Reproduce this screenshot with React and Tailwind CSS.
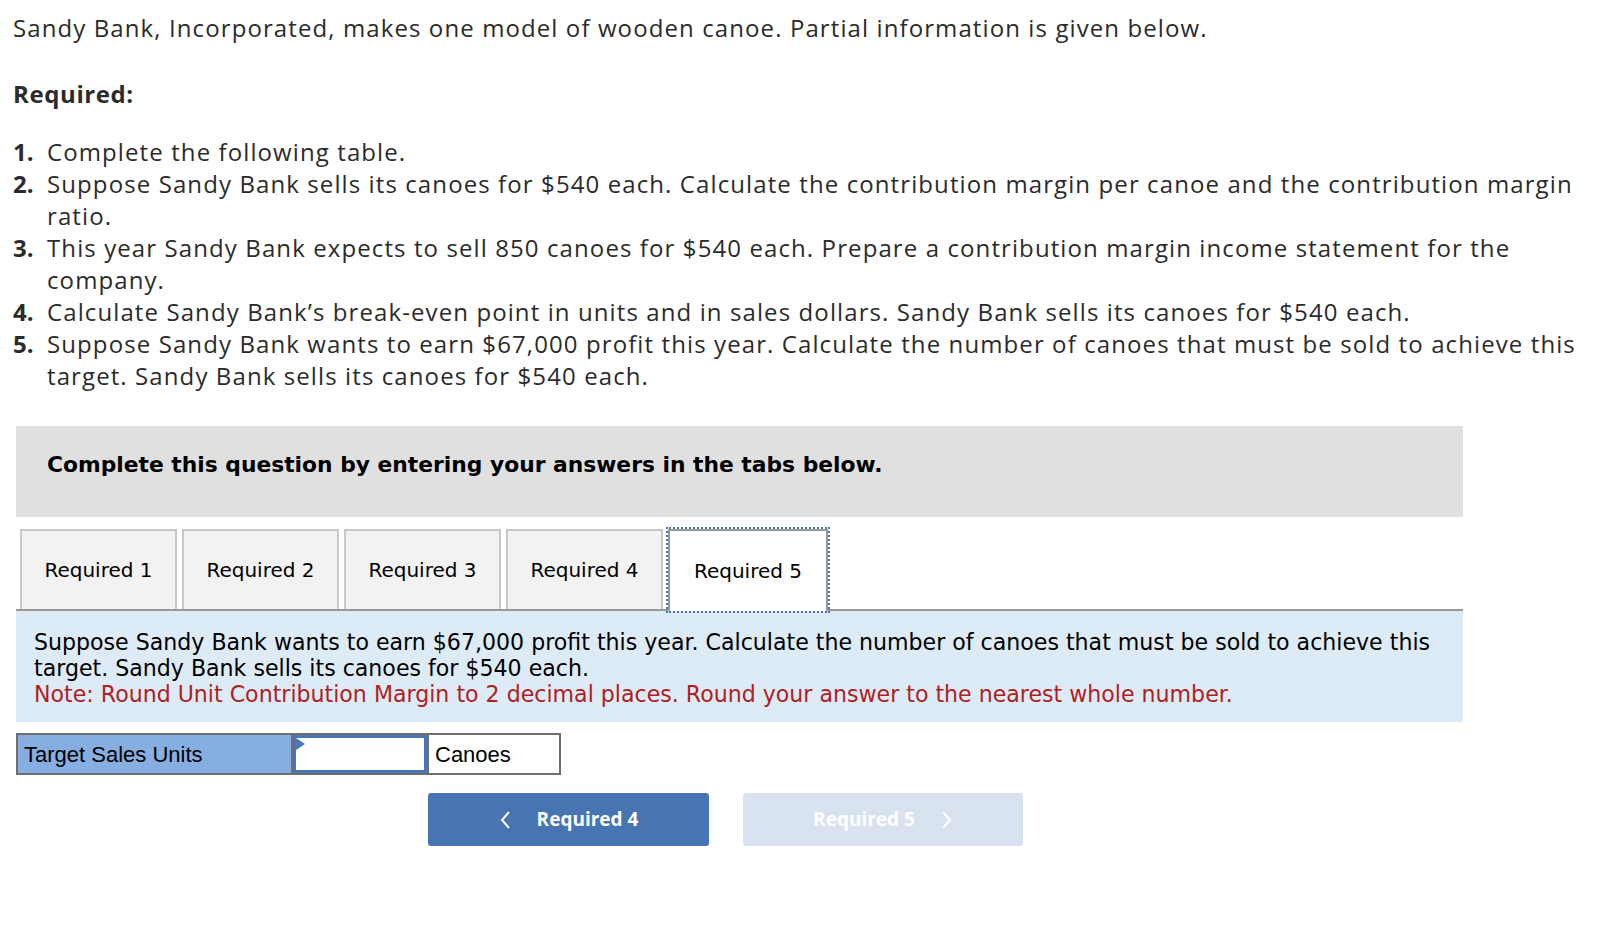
import React, { useState } from "react";

const items = [
  "Complete the following table.",
  "Suppose Sandy Bank sells its canoes for $540 each. Calculate the contribution margin per canoe and the contribution margin ratio.",
  "This year Sandy Bank expects to sell 850 canoes for $540 each. Prepare a contribution margin income statement for the company.",
  "Calculate Sandy Bank’s break-even point in units and in sales dollars. Sandy Bank sells its canoes for $540 each.",
  "Suppose Sandy Bank wants to earn $67,000 profit this year. Calculate the number of canoes that must be sold to achieve this target. Sandy Bank sells its canoes for $540 each.",
];

const tabs = ["Required 1", "Required 2", "Required 3", "Required 4", "Required 5"];

const App = () => {
  const [units, setUnits] = useState("");
  const active = 4;

  return (
    <div className="min-h-screen bg-white text-[#2b2b2b]">
      {/* question text */}
      <div className="pl-[13px] pr-[20px] pt-[12px] font-['Open_Sans','Lato',sans-serif] text-[24px] leading-[32px] tracking-[1.1px]">
        <p>Sandy Bank, Incorporated, makes one model of wooden canoe. Partial information is given below.</p>
        <p className="mt-[34px] font-bold tracking-[0.6px]">Required:</p>
        <ol className="mt-[26px]">
          {items.map((t, i) => (
            <li key={i} className="flex">
              <span className="w-[34px] shrink-0 font-bold tracking-normal">{i + 1}.</span>
              <span>{t}</span>
            </li>
          ))}
        </ol>
      </div>

      {/* answer area */}
      <div className="ml-[16px] mt-[34px] w-[1447px] font-['DejaVu_Sans','Verdana',sans-serif] text-black">
        <div className="h-[91px] bg-[#e0e0e0] pl-[31px] pt-[27px] text-[21.8px] leading-[24px] font-bold">
          Complete this question by entering your answers in the tabs below.
        </div>

        <div className="mt-[12px] flex gap-[5px] border-b-2 border-[#999999] pl-[4px]">
          {tabs.map((t, i) =>
            i === active ? (
              <div
                key={t}
                className="relative -mb-[2px] flex h-[82px] w-[160px] items-center justify-center border-2 border-b-0 border-[#999999] bg-white text-[20px] outline-2 outline-dotted outline-[#4a76b5]"
              >
                {t}
              </div>
            ) : (
              <div
                key={t}
                className="flex h-[80px] w-[157px] items-center justify-center border-2 border-b-0 border-[#c8c8c8] bg-[#f2f2f2] text-[20px]"
              >
                {t}
              </div>
            )
          )}
        </div>

        <div className="bg-[#ddebf7] pl-[18px] pr-4 pt-[18px] pb-[15px] text-[22.1px] leading-[26px]">
          <p>
            Suppose Sandy Bank wants to earn $67,000 profit this year. Calculate the number of canoes that must be sold to achieve this target. Sandy Bank sells its canoes for $540 each.
          </p>
          <p className="text-[#b0211d]">
            Note: Round Unit Contribution Margin to 2 decimal places. Round your answer to the nearest whole number.
          </p>
        </div>

        <div className="mt-[11px] flex h-[42px] w-[545px] font-['Liberation_Sans','Arial',sans-serif] text-[22px]">
          <div className="flex w-[277px] items-center border-2 border-[#6e6e6e] bg-[#86aee1] pl-[6px]">Target Sales Units</div>
          <div className="relative flex w-[134px] items-center border-y-2 border-[#6e6e6e] bg-white">
            <input
              value={units}
              onChange={(e) => setUnits(e.target.value)}
              className="h-[38px] w-full border-[3px] border-[#4a76b5] bg-white px-1 text-right outline-none"
            />
            <span className="absolute left-[3px] top-[3px] h-0 w-0 border-y-[6px] border-l-[9px] border-y-transparent border-l-[#4a76b5]" />
          </div>
          <div className="flex w-[134px] items-center border-2 border-[#6e6e6e] bg-white pl-[6px]">Canoes</div>
        </div>

        <div className="mt-[18px] flex gap-[34px] pl-[412px] font-['Open_Sans','Lato',sans-serif] text-[19px] font-bold text-white">
          <button className="flex h-[53px] w-[281px] items-center justify-center gap-[26px] rounded-[3px] bg-[#4774b3]">
            <svg width="12" height="20" viewBox="0 0 12 20" fill="none" stroke="white" strokeWidth="2">
              <path d="M10 2 L3 10 L10 18" />
            </svg>
            <span>Required 4</span>
          </button>
          <button className="flex h-[53px] w-[280px] items-center justify-center gap-[26px] rounded-[3px] bg-[#d8e3ef]">
            <span>Required 5</span>
            <svg width="12" height="20" viewBox="0 0 12 20" fill="none" stroke="white" strokeWidth="2">
              <path d="M2 2 L9 10 L2 18" />
            </svg>
          </button>
        </div>
      </div>
    </div>
  );
};

export default App;
